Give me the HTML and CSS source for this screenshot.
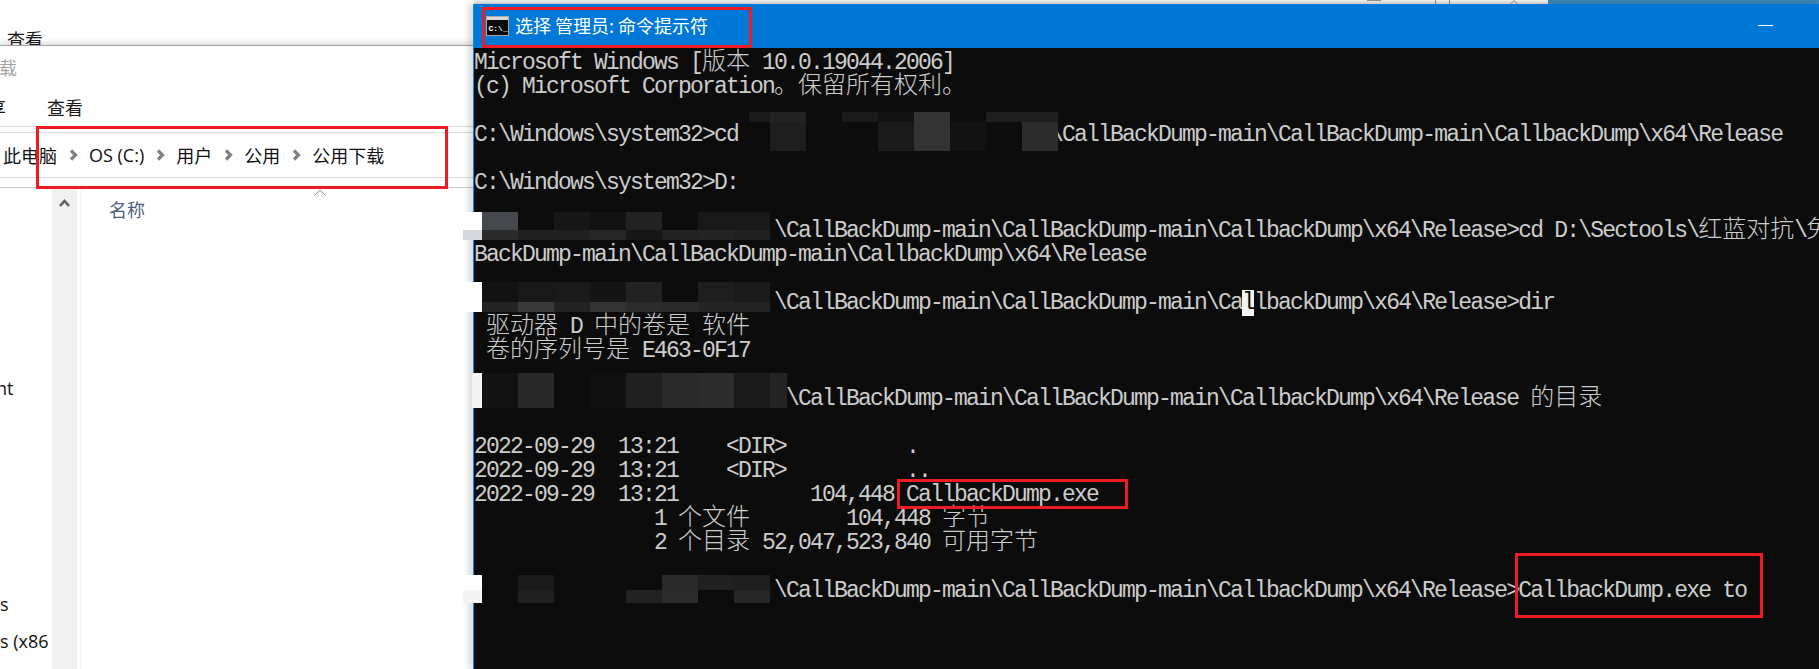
FILE: index.html
```html
<!DOCTYPE html>
<html lang="zh-CN">
<head>
<meta charset="utf-8">
<title>命令提示符</title>
<link rel="stylesheet" href="styles.css">
</head>
<body>
<div class="backwin"><span class="back-tab">查看</span></div>
<div class="topstrip">
  <span class="strip-block"></span>
  <span class="strip-line strip-line-a"></span>
  <span class="strip-line strip-line-b"></span>
  <svg class="strip-caret" width="8" height="4" viewBox="0 0 8 4"><path d="M0.5 4 L4 0.5 L7.5 4" fill="none" stroke="#888" stroke-width="1"/></svg>
</div>

<section class="explorer">
  <div class="ex-title"><span class="ex-title-text">载</span></div>
  <div class="ex-tabs"><span class="tab-cut">享</span><span class="tab-view">查看</span></div>
  <div class="ex-address">
    <span>此电脑</span>
    <svg class="chev" width="9" height="12" viewBox="0 0 9 12"><path d="M2 1.5 L6.5 6 L2 10.5" /></svg>
    <span class="latin">OS (C:)</span>
    <svg class="chev" width="9" height="12" viewBox="0 0 9 12"><path d="M2 1.5 L6.5 6 L2 10.5" /></svg>
    <span>用户</span>
    <svg class="chev" width="9" height="12" viewBox="0 0 9 12"><path d="M2 1.5 L6.5 6 L2 10.5" /></svg>
    <span>公用</span>
    <svg class="chev" width="9" height="12" viewBox="0 0 9 12"><path d="M2 1.5 L6.5 6 L2 10.5" /></svg>
    <span>公用下载</span>
  </div>
  <div class="ex-main">
    <nav class="ex-nav">
      <span class="nav-item nav-a latin">nt</span>
      <span class="nav-item nav-b latin">s</span>
      <span class="nav-item nav-c latin">s (x86</span>
    </nav>
    <div class="ex-scroll">
      <svg width="11" height="8" viewBox="0 0 11 8"><path d="M1 7 L5.5 2 L10 7" fill="none" stroke="#606060" stroke-width="2.6"/></svg>
    </div>
    <div class="ex-list">
      <svg class="sort-caret" width="12" height="7" viewBox="0 0 12 7"><path d="M0.5 6.5 L6 1 L11.5 6.5" fill="none" stroke="#8a8a8a" stroke-width="1"/></svg>
      <span class="col-name">名称</span>
    </div>
  </div>
</section>

<section class="terminal">
  <header class="term-title">
    <svg class="term-icon" width="23" height="20" viewBox="0 0 23 20">
      <rect width="23" height="20" fill="#a9a9a9"/>
      <rect x="1" y="1" width="21" height="3" fill="#d8d8d8"/>
      <rect x="1" y="4" width="21" height="15" fill="#0a0a0a"/>
      <text x="2.5" y="15" class="term-icon-text">C:\_</text>
    </svg>
    <span class="term-caption">选择 管理员: 命令提示符</span>
    <span class="term-min"></span>
  </header>
  <div class="term-body">
    <div class="line">Microsoft Windows [<span class="zh">版本</span> 10.0.19044.2006]</div>
    <div class="line">(c) Microsoft Corporation<span class="zh">。保留所有权利。</span></div>
    <div class="line"></div>
    <div class="line">C:\Windows\system32&gt;cd<span class="gap"></span>\CallBackDump-main\CallBackDump-main\CallbackDump\x64\Release
      <div class="mosaic m-cd">
        <span class="s1a"></span><span></span>
        <span class="s22"></span><span class="s1e"></span>
        <span></span><span></span>
        <span class="s1a"></span><span></span>
        <span class="s12"></span><span class="s1a"></span>
        <span class="s33"></span><span class="s33"></span>
        <span></span><span class="s12"></span>
        <span class="s1e"></span><span></span>
        <span class="s1e"></span><span class="s2c"></span>
      </div>
    </div>
    <div class="line"></div>
    <div class="line">C:\Windows\system32&gt;D:</div>
    <div class="line"></div>
    <div class="line col25">\CallBackDump-main\CallBackDump-main\CallbackDump\x64\Release&gt;cd D:\Sectools\<span class="zh">红蓝对抗</span>\<span class="zh">免</span>
      <div class="mosaic m-a">
        <span class="w"></span><span class="wd"></span>
        <span class="s44"></span><span class="s2a"></span>
        <span></span><span class="s20"></span>
        <span class="s17"></span><span class="s20"></span>
        <span class="s12"></span><span class="s26"></span>
        <span class="s22"></span><span class="s17"></span>
        <span></span><span class="s22"></span>
        <span class="s18"></span><span class="s24"></span>
        <span class="s18"></span><span class="s20"></span>
      </div>
    </div>
    <div class="line">BackDump-main\CallBackDump-main\CallbackDump\x64\Release</div>
    <div class="line"></div>
    <div class="line col25">\CallBackDump-main\CallBackDump-main\Ca<span class="inv">l</span>lbackDump\x64\Release&gt;dir
      <div class="mosaic m-b">
        <span class="w"></span><span class="w"></span>
        <span class="s12"></span><span class="s24"></span>
        <span class="s18"></span><span class="s39"></span>
        <span class="s1a"></span><span class="s22"></span>
        <span class="s14"></span><span class="s33"></span>
        <span class="s22"></span><span class="s2c"></span>
        <span></span><span class="s2a"></span>
        <span class="s1e"></span><span class="s24"></span>
        <span class="s1a"></span><span class="s24"></span>
      </div>
    </div>
    <div class="line"> <span class="zh">驱动器</span> D <span class="zh">中的卷是</span> <span class="zh">软件</span></div>
    <div class="line"> <span class="zh">卷的序列号是</span> E463-0F17</div>
    <div class="line"></div>
    <div class="line col26">\CallBackDump-main\CallBackDump-main\CallbackDump\x64\Release <span class="zh">的目录</span>
      <div class="mosaic m-c">
        <span class="wf"></span><span class="wf"></span>
        <span class="s12"></span><span class="s12"></span>
        <span class="s28"></span><span class="s28"></span>
        <span></span><span></span>
        <span class="s10"></span><span class="s10"></span>
        <span class="s20"></span><span class="s20"></span>
        <span class="s2a"></span><span class="s2a"></span>
        <span class="s2c"></span><span class="s2c"></span>
        <span class="s1a"></span><span class="s1a"></span>
        <span class="s24"></span><span class="s24"></span>
      </div>
    </div>
    <div class="line"></div>
    <div class="line">2022-09-29  13:21    &lt;DIR&gt;          .</div>
    <div class="line">2022-09-29  13:21    &lt;DIR&gt;          ..</div>
    <div class="line">2022-09-29  13:21           104,448 CallbackDump.exe</div>
    <div class="line">               1 <span class="zh">个文件</span>        104,448 <span class="zh">字节</span></div>
    <div class="line">               2 <span class="zh">个目录</span> 52,047,523,840 <span class="zh">可用字节</span></div>
    <div class="line"></div>
    <div class="line col25">\CallBackDump-main\CallBackDump-main\CallbackDump\x64\Release&gt;CallbackDump.exe to
      <div class="mosaic m-d">
        <span class="w"></span><span class="wf"></span>
        <span></span><span></span>
        <span class="s1a"></span><span class="s20"></span>
        <span></span><span></span>
        <span></span><span></span>
        <span></span><span class="s22"></span>
        <span class="s2a"></span><span class="s2c"></span>
        <span class="s20"></span><span></span>
        <span class="s1e"></span><span class="s26"></span>
      </div>
    </div>
  </div>
</section>

<div class="redbox box-address"></div>
<div class="redbox box-title"></div>
<div class="redbox box-file"></div>
<div class="redbox box-cmd"></div>
</body>
</html>
```

FILE: styles.css
```css
* { box-sizing: border-box; }
html, body { margin: 0; padding: 0; }
body {
  position: relative;
  width: 1819px;
  height: 669px;
  overflow: hidden;
  background: #3c87b4;
  font-family: "Noto Sans CJK SC", "Noto Sans", sans-serif;
  font-size: 18px;
  color: #1a1a1a;
}

/* window behind */
.backwin {
  position: absolute;
  left: 0;
  top: 0;
  width: 1548px;
  height: 46px;
  overflow: hidden;
  background: #fff;
  padding: 25px 0 0 7px;
  line-height: 28px;
}
.topstrip {
  position: absolute;
  left: 474px;
  top: 0;
  width: 1074px;
  height: 4px;
  background: linear-gradient(#f2f2f2, #dcdcdc);
  display: flex;
  align-items: flex-start;
}
.strip-block { width: 14px; height: 1px; background: #909090; margin-left: 893px; }
.strip-line { width: 1px; height: 4px; background: #888; }
.strip-line-a { margin-left: 54px; }
.strip-line-b { margin-left: 13px; }
.strip-caret { margin-left: 60px; }

/* explorer */
.explorer {
  position: absolute;
  left: 0;
  top: 45px;
  width: 474px;
  height: 624px;
  background: #fff;
  border-top: 1px solid #a2a2a2;
  box-shadow: 0 -3px 5px rgba(0, 0, 0, .12);
  display: flex;
  flex-direction: column;
  overflow: hidden;
}
.ex-title { height: 36px; padding-top: 8px; line-height: 26px; color: #a3a3a3; }
.ex-title-text { display: block; margin-left: -1px; }
.ex-tabs {
  height: 45px;
  padding-top: 12px;
  line-height: 26px;
  border-bottom: 1px solid #dadada;
  display: flex;
}
.tab-cut { margin-left: -12px; width: 18px; }
.tab-view { margin-left: 41px; }
.ex-address {
  margin-top: 5px;
  height: 46px;
  border-top: 1px solid #d9d9d9;
  border-bottom: 1px solid #d9d9d9;
  display: flex;
  align-items: center;
  gap: 11.5px;
  padding-left: 3px;
  line-height: 26px;
  color: #111;
}
.latin { font-family: "Open Sans", "Noto Sans", sans-serif; }
.chev path { fill: none; stroke: #808080; stroke-width: 3.2; }
.ex-main {
  flex: 1;
  margin-top: 9px;
  border-top: 1px solid #c8c8c8;
  display: flex;
  min-height: 0;
}
.ex-nav {
  width: 52px;
  display: flex;
  flex-direction: column;
  align-items: flex-start;
  overflow: hidden;
  line-height: 24px;
}
.nav-item { white-space: nowrap; color: #111; }
.nav-a { margin: 188px 0 0 -4px; }
.nav-b { margin: 192px 0 0 0; }
.nav-c { margin: 13px 0 0 0; }
.ex-scroll {
  width: 25px;
  background: #f0f0f0;
  display: flex;
  justify-content: center;
  align-items: flex-start;
  padding-top: 11px;
}
.ex-list {
  flex: 1;
  margin-left: 3px;
  border-left: 1px solid #f2f2f2;
  position: relative;
  padding: 8px 0 0 28px;
  line-height: 26px;
}
.col-name { color: #4c607a; }
.sort-caret { position: absolute; left: 233px; top: 1px; }

/* terminal */
.terminal {
  position: absolute;
  left: 473px;
  top: 4px;
  width: 1346px;
  height: 665px;
  border-left: 1px solid #1f84da;
  background: #0c0c0c;
  box-shadow: -4px 0 7px rgba(0, 0, 0, .16);
}
.term-title {
  height: 44px;
  background: #0078d7;
  display: flex;
  align-items: center;
  padding: 0 46px 0 12px;
  color: #fff;
}
.term-icon { margin-right: 6px; }
.term-icon-text { font: bold 8px "Liberation Mono", monospace; fill: #fff; }
.term-caption { flex: 1; line-height: 24px; margin-top: -2px; }
.term-min { width: 15px; height: 1px; background: #fff; margin-top: -2px; }
.term-body {
  padding-top: 2px;
  color: #cccccc;
  font-family: "Liberation Mono", monospace;
  font-size: 23px;
  letter-spacing: -1.8px;
}
.line {
  position: relative;
  height: 24px;
  line-height: 26px;
  white-space: pre;
}
.zh {
  font-family: "Noto Sans CJK SC", sans-serif;
  font-size: 24px;
  letter-spacing: 0;
  font-weight: 300;
  line-height: 0;
}
.col25 { padding-left: 300px; }
.col26 { padding-left: 312px; }
.gap { display: inline-block; width: 312px; }
.inv { background: #f2f2f2; color: #0c0c0c; }

/* pixelated redactions */
.mosaic {
  position: absolute;
  display: grid;
  grid-auto-flow: column;
  grid-template-columns: 19px;
  grid-auto-columns: 36px;
  overflow: hidden;
}
.m-cd { left: 275px; top: -10px; grid-template-columns: 21px; grid-template-rows: 10px 29px; }
.m-a { left: -11px; top: -6px; grid-template-rows: 18px 10px; }
.m-b { left: -11px; top: -8px; grid-template-rows: 20px 10px; }
.m-c { left: -2px; top: -13px; width: 315px; grid-template-columns: 10px; grid-template-rows: 18px 17px; }
.m-d { left: -11px; top: -3px; grid-template-rows: 15px 13px; }
.w { background: #fff; }
.wf { background: #f5f5f5; }
.wd { background: #d5d9de; }
.s10 { background: #101010; }
.s12 { background: #121212; }
.s14 { background: #141414; }
.s17 { background: #171717; }
.s18 { background: #181818; }
.s1a { background: #1a1a1a; }
.s1e { background: #1e1e1e; }
.s20 { background: #202020; }
.s22 { background: #222222; }
.s24 { background: #242424; }
.s26 { background: #262626; }
.s28 { background: #282828; }
.s2a { background: #2a2a2a; }
.s2c { background: #2c2c2c; }
.s33 { background: #333333; }
.s39 { background: #393939; }
.s44 { background: #44474b; }

/* annotation boxes */
.redbox { position: absolute; border: 3px solid #ed1c24; }
.box-address { left: 36px; top: 126px; width: 412px; height: 63px; }
.box-title { left: 482px; top: 7px; width: 270px; height: 41px; }
.box-file { left: 897px; top: 479px; width: 231px; height: 30px; }
.box-cmd { left: 1515px; top: 553px; width: 248px; height: 65px; }
```
